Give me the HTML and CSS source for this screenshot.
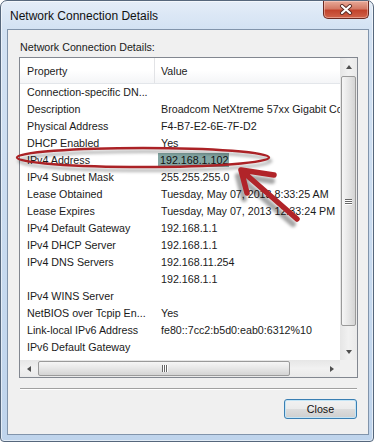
FILE: index.html
```html
<!DOCTYPE html>
<html lang="en">
<head>
    <meta charset="UTF-8">
    <meta name="viewport" content="width=device-width, initial-scale=1.0">
    <title>Network Connection Details</title>
    <link rel="stylesheet" href="styles.css">
</head>
<body>
    <div class="window">
        <div class="titlebar">
            <span class="title">Network Connection Details</span>
            <div class="close-x">
                <svg width="14" height="11" viewBox="0 0 14 11">
                    <path d="M3 2 L11 9 M11 2 L3 9" stroke="#5a2a24" stroke-width="4" stroke-linecap="round"/>
                    <path d="M3 2 L11 9 M11 2 L3 9" stroke="#fff" stroke-width="2.2" stroke-linecap="round"/>
                </svg>
            </div>
        </div>
        <div class="client">
            <div class="caption">Network Connection Details:</div>
            <div class="listview">
                <div class="lv-body">
                    <div class="lv-content">
                        <div class="lv-header">
                            <div class="col-prop">Property</div>
                            <div class="col-val">Value</div>
                        </div>
                        <div class="lv-row"><div class="col-prop">Connection-specific DN...</div><div class="col-val"></div></div>
                        <div class="lv-row"><div class="col-prop">Description</div><div class="col-val">Broadcom NetXtreme 57xx Gigabit Controller</div></div>
                        <div class="lv-row"><div class="col-prop">Physical Address</div><div class="col-val">F4-B7-E2-6E-7F-D2</div></div>
                        <div class="lv-row"><div class="col-prop">DHCP Enabled</div><div class="col-val">Yes</div></div>
                        <div class="lv-row"><div class="col-prop">IPv4 Address</div><div class="col-val"><span class="selected">192.168.1.102</span></div></div>
                        <div class="lv-row"><div class="col-prop">IPv4 Subnet Mask</div><div class="col-val">255.255.255.0</div></div>
                        <div class="lv-row"><div class="col-prop">Lease Obtained</div><div class="col-val">Tuesday, May 07, 2013 8:33:25 AM</div></div>
                        <div class="lv-row"><div class="col-prop">Lease Expires</div><div class="col-val">Tuesday, May 07, 2013 12:33:24 PM</div></div>
                        <div class="lv-row"><div class="col-prop">IPv4 Default Gateway</div><div class="col-val">192.168.1.1</div></div>
                        <div class="lv-row"><div class="col-prop">IPv4 DHCP Server</div><div class="col-val">192.168.1.1</div></div>
                        <div class="lv-row"><div class="col-prop">IPv4 DNS Servers</div><div class="col-val">192.168.11.254</div></div>
                        <div class="lv-row"><div class="col-prop"></div><div class="col-val">192.168.1.1</div></div>
                        <div class="lv-row"><div class="col-prop">IPv4 WINS Server</div><div class="col-val"></div></div>
                        <div class="lv-row"><div class="col-prop">NetBIOS over Tcpip En...</div><div class="col-val">Yes</div></div>
                        <div class="lv-row"><div class="col-prop">Link-local IPv6 Address</div><div class="col-val">fe80::7cc2:b5d0:eab0:6312%10</div></div>
                        <div class="lv-row"><div class="col-prop">IPv6 Default Gateway</div><div class="col-val"></div></div>
                        <div class="lv-row"><div class="col-prop">IPv6 DNS Server</div><div class="col-val"></div></div>
                    </div>
                    <div class="vscroll">
                        <div class="sb-btn"><span class="tri tri-up"></span></div>
                        <div class="v-thumb"><span class="grip-h"></span><span class="grip-h"></span><span class="grip-h"></span></div>
                        <div class="sb-track"></div>
                        <div class="sb-btn"><span class="tri tri-down"></span></div>
                    </div>
                </div>
                <div class="lv-foot">
                    <div class="hscroll">
                        <div class="sb-btn"><span class="tri tri-left"></span></div>
                        <div class="h-thumb"><span class="grip-v"></span><span class="grip-v"></span><span class="grip-v"></span></div>
                        <div class="sb-track"></div>
                        <div class="sb-btn"><span class="tri tri-right"></span></div>
                    </div>
                    <div class="corner"></div>
                </div>
            </div>
            <div class="separator"></div>
            <div class="actions">
                <button class="btn">Close</button>
            </div>
        </div>
    </div>

    <!-- hand drawn annotation over the dialog -->
    <svg class="annotation" width="376" height="444" viewBox="0 0 376 444">
        <defs>
            <filter id="soft" x="-20%" y="-50%" width="140%" height="200%">
                <feGaussianBlur stdDeviation="1.8"/>
            </filter>
        </defs>
        <ellipse cx="145" cy="161" rx="126" ry="9.5" fill="none" stroke="rgba(0,0,0,0.28)" stroke-width="3" filter="url(#soft)"/>
        <ellipse cx="143" cy="157.5" rx="126" ry="9.5" fill="none" stroke="#ab2226" stroke-width="2.4"/>
        <g fill="none" stroke="rgba(0,0,0,0.35)" stroke-width="6" stroke-linecap="round" stroke-linejoin="round" filter="url(#soft)">
            <path d="M293 224 L238 176 M238 176 L272 181 M238 176 L244 199"/>
        </g>
        <g fill="none" stroke="#b12429" stroke-width="5.5" stroke-linecap="round" stroke-linejoin="round">
            <path d="M297 219 L242 171 M241 170 L274 175 M241 170 L247 193"/>
        </g>
    </svg>
</body>
</html>
```

FILE: styles.css
```css
body {
    margin: 0;
    background: #fff;
    font-family: 'Liberation Sans', Arial, sans-serif;
    font-size: 10.7px;
    color: #1a1a1a;
    position: relative;
    width: 376px;
    height: 444px;
    overflow: hidden;
}
.window {
    width: 374px;
    height: 442px;
    box-sizing: border-box;
    border: 1px solid #56677c;
    border-radius: 7px 7px 4px 4px;
    background: linear-gradient(180deg, #e4edf8 0, #d3e2f3 28px, #bfd4ec 100%);
    box-shadow: inset 0 0 0 1px rgba(255,255,255,0.55);
    padding: 0 4px 5px 6px;
    display: flex;
    flex-direction: column;
}
.titlebar {
    height: 28px;
    display: flex;
    justify-content: space-between;
    align-items: flex-start;
}
.title {
    font-size: 12px;
    line-height: 16px;
    margin: 7px 0 0 3px;
    color: #111;
}
.close-x {
    width: 46px;
    height: 18px;
    box-sizing: border-box;
    border: 1px solid #6b2a22;
    border-top: none;
    border-radius: 0 0 5px 5px;
    background: linear-gradient(180deg, #e8aa98 0, #d47a66 45%, #c2432c 55%, #d0634a 100%);
    box-shadow: inset 0 0 0 1px rgba(255,220,210,0.45);
    margin-right: 0;
    display: flex;
    align-items: center;
    justify-content: center;
}
.client {
    border: 1px solid #8194ab;
    background: #f0f0f0;
    padding: 10px 10px 15px 11px;
    display: flex;
    flex-direction: column;
}
.caption {
    line-height: 14px;
    margin-bottom: 3px;
    padding-left: 1px;
}
.listview {
    width: 339px;
    box-sizing: border-box;
    border: 1px solid #828790;
    background: #fff;
}
.lv-body {
    display: flex;
    height: 302px;
}
.lv-content {
    width: 320px;
    overflow: hidden;
}
.lv-header {
    display: flex;
    height: 26px;
    box-sizing: border-box;
    border-bottom: 1px solid #e3e6ea;
    background: linear-gradient(180deg, #ffffff 0, #ffffff 50%, #f4f5f7 100%);
    align-items: center;
    color: #222;
}
.lv-header .col-prop {
    border-right: 1px solid #e2e3e6;
    align-self: stretch;
    display: flex;
    align-items: center;
}
.lv-row {
    display: flex;
    height: 17px;
    line-height: 17px;
    white-space: nowrap;
}
.col-prop {
    width: 135px;
    box-sizing: border-box;
    padding-left: 7px;
    flex-shrink: 0;
    overflow: hidden;
}
.col-val {
    padding-left: 6px;
    white-space: nowrap;
}
.selected {
    background: #84a6a3;
    color: #111;
    padding: 1px 1px 1px 2px;
    margin-left: -3px;
}
.vscroll {
    width: 17px;
    display: flex;
    flex-direction: column;
    background: linear-gradient(90deg, #e6e6e6 0, #f1f1f1 50%, #e9e9e9 100%);
}
.hscroll {
    width: 320px;
    height: 17px;
    display: flex;
    background: linear-gradient(180deg, #e6e6e6 0, #f1f1f1 50%, #e9e9e9 100%);
}
.lv-foot {
    display: flex;
}
.corner {
    width: 17px;
    height: 17px;
    background: #f0f0f0;
}
.sb-btn {
    width: 17px;
    height: 17px;
    flex-shrink: 0;
    display: flex;
    align-items: center;
    justify-content: center;
}
.sb-track {
    flex: 1;
}
.tri {
    width: 0;
    height: 0;
    border: 4px solid transparent;
}
.tri-up { border-bottom: 4px solid #4f4f4f; border-top-width: 0; border-left-width: 3.5px; border-right-width: 3.5px; }
.tri-down { border-top: 4px solid #4f4f4f; border-bottom-width: 0; border-left-width: 3.5px; border-right-width: 3.5px; }
.tri-left { border-right: 4px solid #4f4f4f; border-left-width: 0; border-top-width: 3.5px; border-bottom-width: 3.5px; }
.tri-right { border-left: 4px solid #4f4f4f; border-right-width: 0; border-top-width: 3.5px; border-bottom-width: 3.5px; }
.v-thumb {
    margin: 1px 0 0 1px;
    width: 15px;
    height: 250px;
    box-sizing: border-box;
    border: 1px solid #9a9a9a;
    border-radius: 2px;
    background: linear-gradient(90deg, #f6f6f6 0, #e6e6e6 50%, #d4d4d4 100%);
    display: flex;
    flex-direction: column;
    align-items: center;
    justify-content: center;
    gap: 1px;
}
.h-thumb {
    margin: 1px 0 0 1px;
    width: 252px;
    height: 15px;
    box-sizing: border-box;
    border: 1px solid #9a9a9a;
    border-radius: 2px;
    background: linear-gradient(180deg, #f6f6f6 0, #e6e6e6 50%, #d4d4d4 100%);
    display: flex;
    align-items: center;
    justify-content: center;
    gap: 1px;
}
.grip-h {
    width: 7px;
    height: 1px;
    background: #666;
    box-shadow: 0 1px 0 #fff;
}
.grip-v {
    width: 1px;
    height: 7px;
    background: #666;
    box-shadow: 1px 0 0 #fff;
}
.separator {
    margin: 10px 1px 0 1px;
    height: 1px;
    background: #a0a0a0;
    border-bottom: 1px solid #fff;
}
.actions {
    display: flex;
    justify-content: flex-end;
    margin-top: 9px;
    padding-right: 1px;
}
.btn {
    width: 73px;
    height: 20px;
    border: 1px solid #3a7fb3;
    border-radius: 3px;
    background: linear-gradient(180deg, #f2f2f2 0, #ebebeb 50%, #dddddd 51%, #cfcfcf 100%);
    box-shadow: inset 0 0 0 1px #c4e5f6;
    font-family: 'Liberation Sans', Arial, sans-serif;
    font-size: 10.7px;
    color: #111;
    padding: 0;
}
.annotation {
    position: absolute;
    top: 0;
    left: 0;
    pointer-events: none;
}
```
